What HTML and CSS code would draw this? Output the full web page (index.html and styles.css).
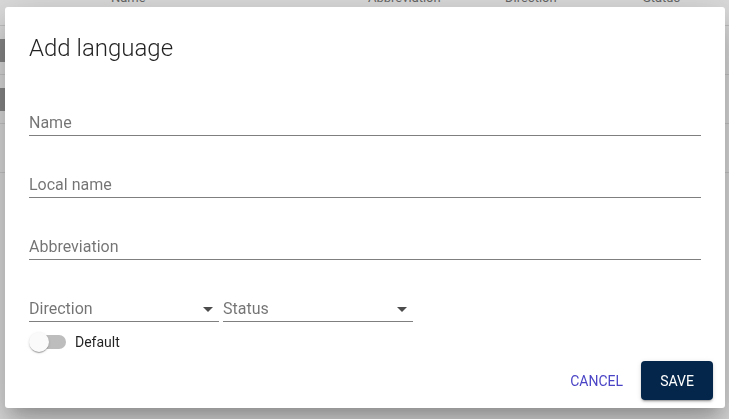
FILE: index.html
```html
<!DOCTYPE html>
<html lang="en">
<head>
<meta charset="utf-8">
<title>Add language</title>
<link rel="stylesheet" href="styles.css">
</head>
<body>
<div class="page">
  <div class="thead">
    <span class="th th-name">Name</span>
    <span class="th th-abbr">Abbreviation</span>
    <span class="th th-dir">Direction</span>
    <span class="th th-status">Status</span>
  </div>
  <div class="trow"><span class="chip"></span></div>
  <div class="trow"><span class="chip"></span></div>
  <div class="trow"></div>
</div>

<div class="backdrop"></div>

<div class="dialog">
  <h1 class="title">Add language</h1>
  <div class="field"><span class="label">Name</span></div>
  <div class="field"><span class="label">Local name</span></div>
  <div class="field"><span class="label">Abbreviation</span></div>
  <div class="select-row">
    <div class="field select"><span class="label">Direction</span><span class="arrow"></span></div>
    <div class="field select"><span class="label">Status</span><span class="arrow"></span></div>
  </div>
  <div class="toggle-row">
    <span class="toggle"><span class="track"></span><span class="thumb"></span></span>
    <span class="toggle-label">Default</span>
  </div>
  <div class="actions">
    <button class="btn btn-text">CANCEL</button>
    <button class="btn btn-primary">SAVE</button>
  </div>
</div>
</body>
</html>
```
FILE: styles.css
```css
html, body {
  margin: 0;
  padding: 0;
}
body {
  width: 729px;
  height: 419px;
  overflow: hidden;
  background: #e4e4e4;
  font-family: Roboto, "Noto Sans", Arial, sans-serif;
}

/* underlying page */
.page {
  margin-top: -10px;
}
.thead {
  height: 35px;
  border-bottom: 1px solid #c9c9c9;
  position: relative;
}
.th {
  font-size: 13px;
  color: #6a6a6a;
  line-height: 16px;
  position: absolute;
  top: 0;
}
.th-name { left: 111px; }
.th-abbr { left: 368px; }
.th-dir { left: 505px; }
.th-status { left: 643px; }
.trow {
  height: 48px;
  border-bottom: 1px solid #cfcfcf;
  display: flex;
  align-items: center;
}
.chip {
  width: 6px;
  height: 23px;
  background: #8d8d8d;
}

.backdrop {
  position: fixed;
  inset: 0;
  background: rgba(0, 0, 0, 0.04);
}

/* dialog */
.dialog {
  position: fixed;
  left: 5px;
  top: 7px;
  width: 720px;
  height: 401px;
  box-sizing: border-box;
  padding: 25px 24px 0 24px;
  background: #fff;
  border-radius: 3px;
  box-shadow: 0 11px 15px -7px rgba(0,0,0,.2), 0 24px 38px 3px rgba(0,0,0,.14), 0 9px 46px 8px rgba(0,0,0,.12);
  display: flex;
  flex-direction: column;
}
.title {
  margin: 0 0 10px 0;
  font-size: 24px;
  font-weight: 300;
  line-height: 32px;
  color: rgba(0,0,0,.87);
}
.field {
  height: 62px;
  box-sizing: border-box;
  padding: 39px 0 2px 0;
  border-bottom: 1px solid rgba(0,0,0,.5);
  display: flex;
  align-items: center;
}
.label {
  font-size: 16px;
  line-height: 20px;
  color: rgba(0,0,0,.55);
}
.select-row {
  display: flex;
  gap: 4px;
}
.select {
  width: 190px;
  justify-content: space-between;
  padding-right: 6px;
}
.arrow {
  width: 0;
  height: 0;
  border-left: 5px solid transparent;
  border-right: 5px solid transparent;
  border-top: 5px solid rgba(0,0,0,.7);
  margin-top: 1px;
}
.toggle-row {
  margin-top: 8px;
  height: 24px;
  display: flex;
  align-items: center;
}
.toggle {
  width: 38px;
  height: 24px;
  position: relative;
  display: inline-block;
}
.track {
  position: absolute;
  left: 1px;
  top: 5px;
  width: 36px;
  height: 14px;
  border-radius: 8px;
  background: #bdbdbd;
}
.thumb {
  position: absolute;
  left: 0;
  top: 2px;
  width: 20px;
  height: 20px;
  border-radius: 50%;
  background: #fafafa;
  box-shadow: 0 2px 1px -1px rgba(0,0,0,.2), 0 1px 1px 0 rgba(0,0,0,.14), 0 1px 3px 0 rgba(0,0,0,.12);
}
.toggle-label {
  margin-left: 8px;
  font-size: 14px;
  color: rgba(0,0,0,.87);
}
.actions {
  margin-top: auto;
  margin-bottom: 8px;
  margin-right: -12px;
  display: flex;
  justify-content: flex-end;
  align-items: center;
  gap: 2px;
}
.btn {
  font-family: Roboto, "Noto Sans", Arial, sans-serif;
  font-size: 14px;
  font-weight: 400;
  border: none;
  cursor: pointer;
  height: 39px;
  border-radius: 4px;
}
.btn-text {
  background: transparent;
  color: #4b45c6;
  padding: 0 16px;
}
.btn-primary {
  background: #04264a;
  color: #fff;
  width: 72px;
  padding: 0;
  box-shadow: 0 3px 1px -2px rgba(0,0,0,.2), 0 2px 2px 0 rgba(0,0,0,.14), 0 1px 5px 0 rgba(0,0,0,.12);
}
```
